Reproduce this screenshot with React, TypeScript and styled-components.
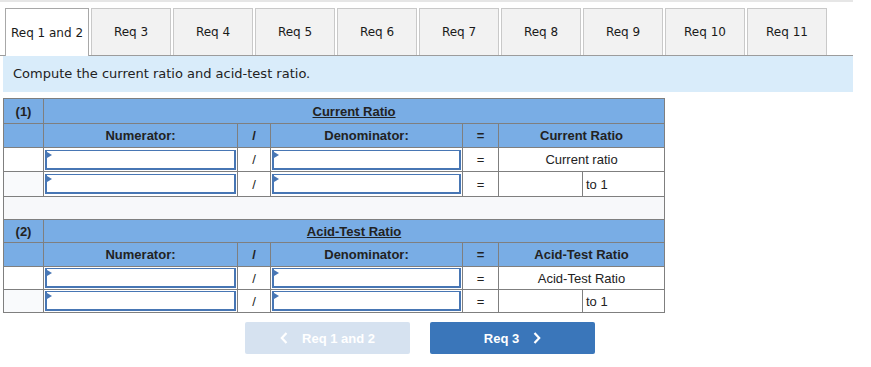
import React from 'react';
import styled, {createGlobalStyle} from 'styled-components';

const GlobalStyle = createGlobalStyle`
    body {
        margin: 0;
        background: #ffffff;
        font-family: 'DejaVu Sans', Verdana, sans-serif;
        color: #1e1e1e;
    }
`;

const Page = styled.div`
    width: 853px;
    border-top: 2px solid #e6e6e6;
`;

const TabBar = styled.div`
    display: flex;
    gap: 2px;
    margin-top: 6px;
    padding-left: 5px;
    height: 47px;
    border-bottom: 1px solid #9c9c9c;
`;

const Tab = styled.div<{$active?: boolean; $width: number}>`
    box-sizing: border-box;
    width: ${props => props.$width}px;
    height: ${props => (props.$active ? '48px' : '47px')};
    display: flex;
    align-items: center;
    justify-content: center;
    background: ${props => (props.$active ? '#ffffff' : '#f2f2f2')};
    border: 1px solid ${props => (props.$active ? '#a8a8a8' : '#c9c9c9')};
    border-bottom: none;
    font-size: 12px;
    color: #1a1a1a;
`;

const Instruction = styled.div`
    margin-left: 3px;
    height: 36px;
    line-height: 36px;
    padding-left: 10px;
    background: #d9ecfa;
    font-size: 13px;
    color: #222222;
`;

const Table = styled.table`
    margin: 6px 0 0 3px;
    border-collapse: collapse;
    table-layout: fixed;
    width: 661px;
    font-family: 'Liberation Sans', Arial, sans-serif;
    font-size: 13px;
    color: #222222;

    td {
        border: 1px solid #7f7f7f;
        padding: 0;
        text-align: center;
    }
`;

const HeadRow = styled.tr<{$h: number}>`
    height: ${props => props.$h}px;
    background: #79ade5;
    font-weight: bold;
`;

const DataRow = styled.tr<{$h: number; $shade?: boolean}>`
    height: ${props => props.$h}px;
    background: #ffffff;

    td:first-child {
        background: ${props => (props.$shade ? '#f9fafc' : '#ffffff')};
    }
`;

const BlankRow = styled.tr`
    height: 23px;
    background: #f7f8fa;
`;

const Title = styled.span`
    text-decoration: underline;
`;

const InputCell = styled.td`
    && {
        padding: 1px;
    }
`;

const InputBox = styled.div`
    position: relative;
    box-sizing: border-box;
    height: 20px;
    border: 2px solid #4776b4;
    border-top-width: 1px;
    background: #ffffff;

    &::before {
        content: '';
        position: absolute;
        left: 0;
        top: 1px;
        border-top: 3px solid transparent;
        border-bottom: 3px solid transparent;
        border-left: 5px solid #4776b4;
    }
`;

const ToCell = styled.td`
    && {
        text-align: left;
        padding-left: 3px;
    }
`;

const Nav = styled.div`
    display: flex;
    gap: 20px;
    margin-top: 9px;
    padding-left: 245px;
`;

const NavButton = styled.div<{$disabled?: boolean}>`
    width: 165px;
    height: 32px;
    border-radius: 2px;
    display: flex;
    align-items: center;
    justify-content: center;
    gap: 14px;
    background: ${props => (props.$disabled ? '#d6e2f0' : '#3a76ba')};
    color: #ffffff;
    font-family: 'Liberation Sans', Arial, sans-serif;
    font-weight: bold;
    font-size: 13px;
`;

const Chevron = ({left}: {left?: boolean}) => (
    <svg width="8" height="12" viewBox="0 0 8 12">
        <path
            d={left ? 'M6.5 1 L1.8 6 L6.5 11' : 'M1.5 1 L6.2 6 L1.5 11'}
            fill="none"
            stroke="#ffffff"
            strokeWidth="2.2"
        />
    </svg>
);

const tabs = ['Req 1 and 2', 'Req 3', 'Req 4', 'Req 5', 'Req 6', 'Req 7', 'Req 8', 'Req 9', 'Req 10', 'Req 11'];

// row heights taken from the two blocks of the sheet
const RatioBlock = ({num, title, label, heights}: {num: string; title: string; label: string; heights: number[]}) => (
    <>
        <HeadRow $h={heights[0]}>
            <td>{num}</td>
            <td colSpan={6}>
                <Title>{title}</Title>
            </td>
        </HeadRow>
        <HeadRow $h={heights[1]}>
            <td></td>
            <td>Numerator:</td>
            <td>/</td>
            <td>Denominator:</td>
            <td>=</td>
            <td colSpan={2}>{title}</td>
        </HeadRow>
        <DataRow $h={heights[2]}>
            <td></td>
            <InputCell>
                <InputBox />
            </InputCell>
            <td>/</td>
            <InputCell>
                <InputBox />
            </InputCell>
            <td>=</td>
            <td colSpan={2}>{label}</td>
        </DataRow>
        <DataRow $h={heights[3]} $shade>
            <td></td>
            <InputCell>
                <InputBox />
            </InputCell>
            <td>/</td>
            <InputCell>
                <InputBox />
            </InputCell>
            <td>=</td>
            <td></td>
            <ToCell>to 1</ToCell>
        </DataRow>
    </>
);

const App = () => {
    return (
        <Page>
            <GlobalStyle />
            <TabBar>
                {tabs.map((tab, index) => (
                    <Tab key={tab} $active={index === 0} $width={index === 0 ? 84 : 80}>
                        {tab}
                    </Tab>
                ))}
            </TabBar>
            <Instruction>Compute the current ratio and acid-test ratio.</Instruction>
            <Table>
                <colgroup>
                    <col style={{width: 40}} />
                    <col style={{width: 194}} />
                    <col style={{width: 33}} />
                    <col style={{width: 192}} />
                    <col style={{width: 36}} />
                    <col style={{width: 84}} />
                    <col style={{width: 82}} />
                </colgroup>
                <tbody>
                    <RatioBlock num="(1)" title="Current Ratio" label="Current ratio" heights={[25, 24, 24, 25]} />
                    <BlankRow>
                        <td colSpan={7}></td>
                    </BlankRow>
                    <RatioBlock num="(2)" title="Acid-Test Ratio" label="Acid-Test Ratio" heights={[23, 24, 23, 23]} />
                </tbody>
            </Table>
            <Nav>
                <NavButton $disabled>
                    <Chevron left />
                    <span>Req 1 and 2</span>
                </NavButton>
                <NavButton>
                    <span>Req 3</span>
                    <Chevron />
                </NavButton>
            </Nav>
        </Page>
    );
};

export default App;
